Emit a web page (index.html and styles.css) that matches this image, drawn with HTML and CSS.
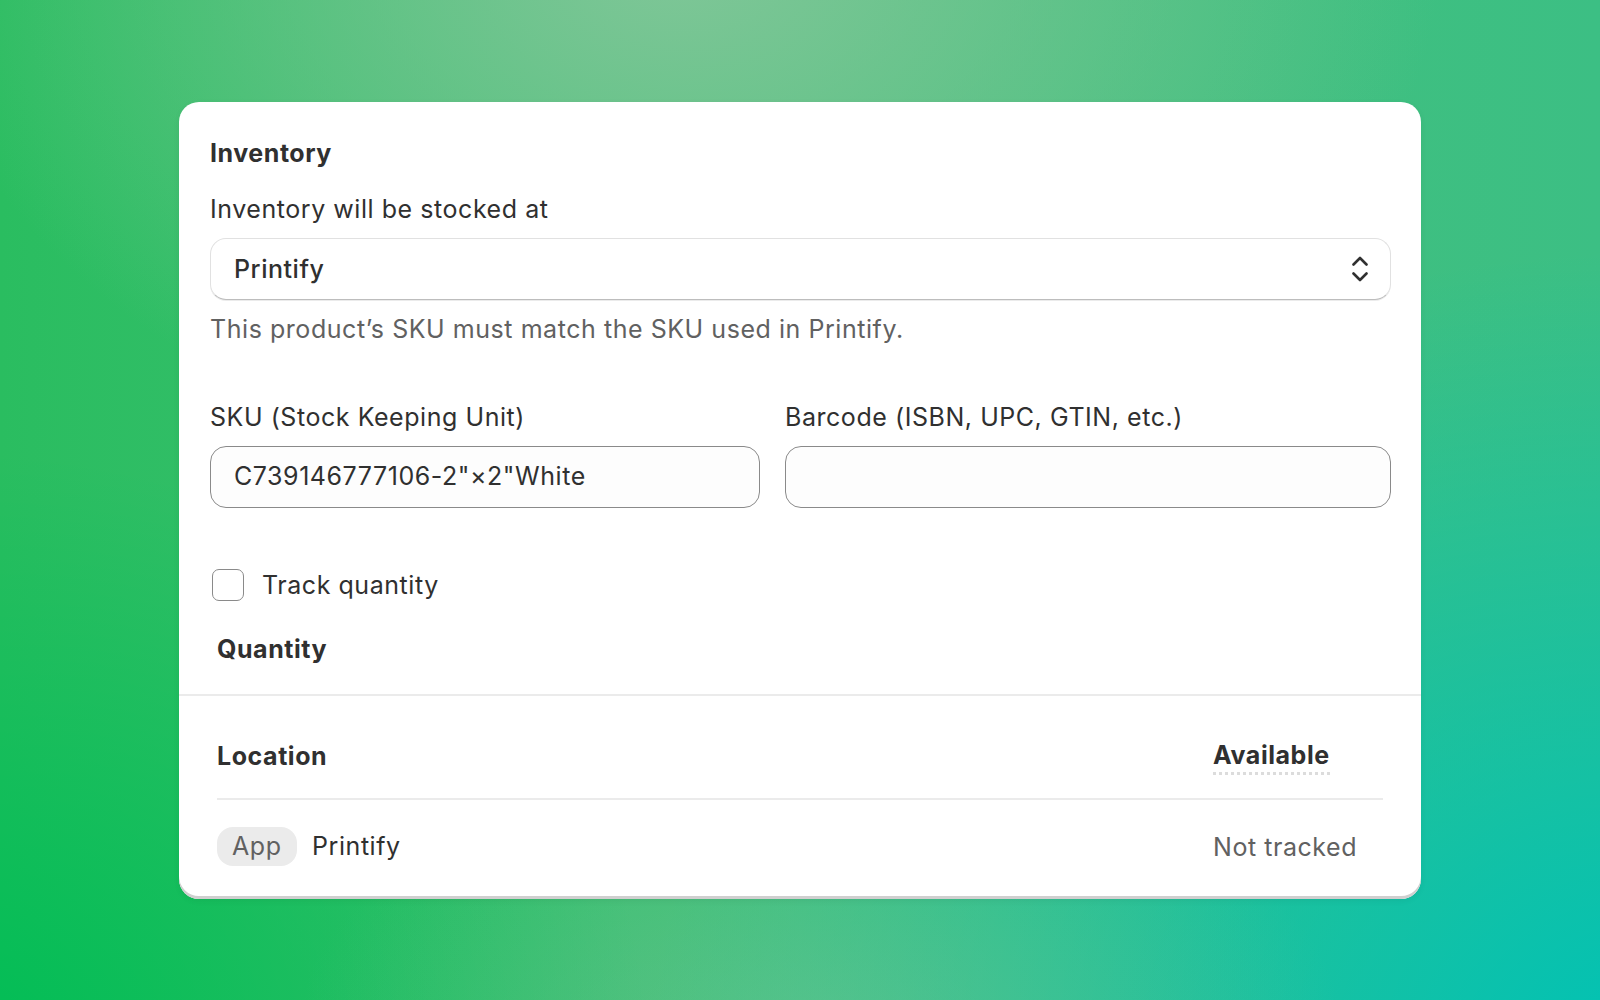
FILE: index.html
```html
<!DOCTYPE html>
<html lang="en">
<head>
    <meta charset="UTF-8">
    <meta name="viewport" content="width=device-width, initial-scale=1.0">
    <title>Inventory</title>
    <link rel="stylesheet" href="styles.css">
</head>
<body>

<div class="card">
    <div class="card-section">
        <h2 class="card-title">Inventory</h2>

        <!-- location select -->
        <label class="field-label" for="location">Inventory will be stocked at</label>
        <div class="select">
            <span class="select-value">Printify</span>
            <svg class="select-icon" width="16" height="26" viewBox="0 0 16 26" fill="none" stroke="#303030" stroke-width="2.6" stroke-linecap="round" stroke-linejoin="round">
                <path d="M1.5 8.5 L8 2 L14.5 8.5"/>
                <path d="M1.5 17.5 L8 24 L14.5 17.5"/>
            </svg>
        </div>
        <p class="help-text">This product’s SKU must match the SKU used in Printify.</p>

        <!-- sku / barcode -->
        <div class="field-row">
            <div class="field">
                <label class="field-label" for="sku">SKU (Stock Keeping Unit)</label>
                <div class="text-input" id="sku">C739146777106-2"×2"White</div>
            </div>
            <div class="field">
                <label class="field-label" for="barcode">Barcode (ISBN, UPC, GTIN, etc.)</label>
                <div class="text-input" id="barcode"></div>
            </div>
        </div>

        <div class="checkbox-row">
            <span class="checkbox"></span>
            <span>Track quantity</span>
        </div>

        <h3 class="sub-title">Quantity</h3>
    </div>

    <div class="card-section table-section">
        <table class="qty-table">
            <thead>
                <tr>
                    <th>Location</th>
                    <th class="col-available"><span class="dotted">Available</span></th>
                </tr>
            </thead>
            <tbody>
                <tr>
                    <td><span class="badge">App</span> Printify</td>
                    <td class="col-available muted">Not tracked</td>
                </tr>
            </tbody>
        </table>
    </div>
</div>

</body>
</html>
```

FILE: styles.css
```css
html, body {
    margin: 0;
    height: 1000px;
    overflow: hidden;
}
body {
    font-family: 'Inter', 'Noto Sans', sans-serif;
    font-size: 25px;
    line-height: 38px;
    letter-spacing: 0.55px;
    color: #303030;
    background:
        radial-gradient(ellipse 760px 520px at 680px -40px, rgba(128, 198, 152, 1), rgba(128, 198, 152, 0) 100%),
        radial-gradient(ellipse 520px 260px at 820px 1020px, rgba(110, 196, 150, 0.5), rgba(110, 196, 150, 0) 100%),
        radial-gradient(ellipse 1000px 800px at 1650px 1050px, rgba(0, 194, 181, 1), rgba(0, 194, 181, 0) 100%),
        radial-gradient(ellipse 700px 600px at -50px 1050px, rgba(0, 189, 85, 1), rgba(0, 189, 85, 0) 100%),
        linear-gradient(90deg, #2abd60 0%, #44c078 50%, #3cbf84 100%);
}

.card {
    width: 1242px;
    margin: 102px auto 0;
    background: #fff;
    border-radius: 20px;
    overflow: hidden;
    box-shadow: inset 0 -3px 0 #cfcfcf, 0 2px 6px rgba(0, 0, 0, 0.06);
}
.card-section {
    padding: 32px 30px 26px 31px;
}

.card-title, .sub-title {
    margin: 0;
    font-size: 25px;
    font-weight: 650;
}
.sub-title {
    margin-top: 26px;
    padding-left: 7px;
}

.field-label {
    display: block;
    margin-top: 18px;
}
.select {
    display: flex;
    align-items: center;
    justify-content: space-between;
    box-sizing: border-box;
    height: 62px;
    margin-top: 10px;
    padding: 0 22px 0 23px;
    border: 1.5px solid #e1e1e1;
    border-bottom-color: #bdbdbd;
    border-radius: 16px;
    box-shadow: 0 1px 0 rgba(0, 0, 0, 0.08);
}
.select-value {
    font-weight: 550;
}
.help-text {
    margin: 10px 0 0;
    color: #616161;
}

.field-row {
    display: grid;
    grid-template-columns: 550px 1fr;
    gap: 25px;
    margin-top: 50px;
}
.field-row .field-label {
    margin-top: 0;
}
.text-input {
    box-sizing: border-box;
    height: 62px;
    margin-top: 10px;
    padding: 0 23px;
    line-height: 59px;
    background: #fdfdfd;
    border: 1.5px solid #8a8a8a;
    border-radius: 16px;
}

.checkbox-row {
    display: flex;
    align-items: center;
    gap: 18px;
    margin-top: 58px;
    padding-left: 2px;
}
.checkbox {
    box-sizing: border-box;
    width: 32px;
    height: 32px;
    border: 1.5px solid #8a8a8a;
    border-radius: 7px;
}

.table-section {
    border-top: 2px solid #ebebeb;
    padding: 40px 38px 33px;
}
.qty-table {
    width: 100%;
    border-collapse: collapse;
}
.qty-table th {
    text-align: left;
    font-weight: 650;
    padding: 0 0 23px;
    border-bottom: 2px solid #ebebeb;
}
.qty-table td {
    padding: 27px 0 0;
}
.col-available {
    width: 170px;
}
.dotted {
    display: inline-block;
    line-height: 30px;
    padding-bottom: 2px;
    border-bottom: 3px dotted #dcdcdc;
}
.muted {
    color: #616161;
}
.badge {
    display: inline-block;
    height: 39px;
    line-height: 39px;
    padding: 0 15px;
    margin-right: 8px;
    border-radius: 16px;
    background: #ebebeb;
    color: #616161;
}
```
